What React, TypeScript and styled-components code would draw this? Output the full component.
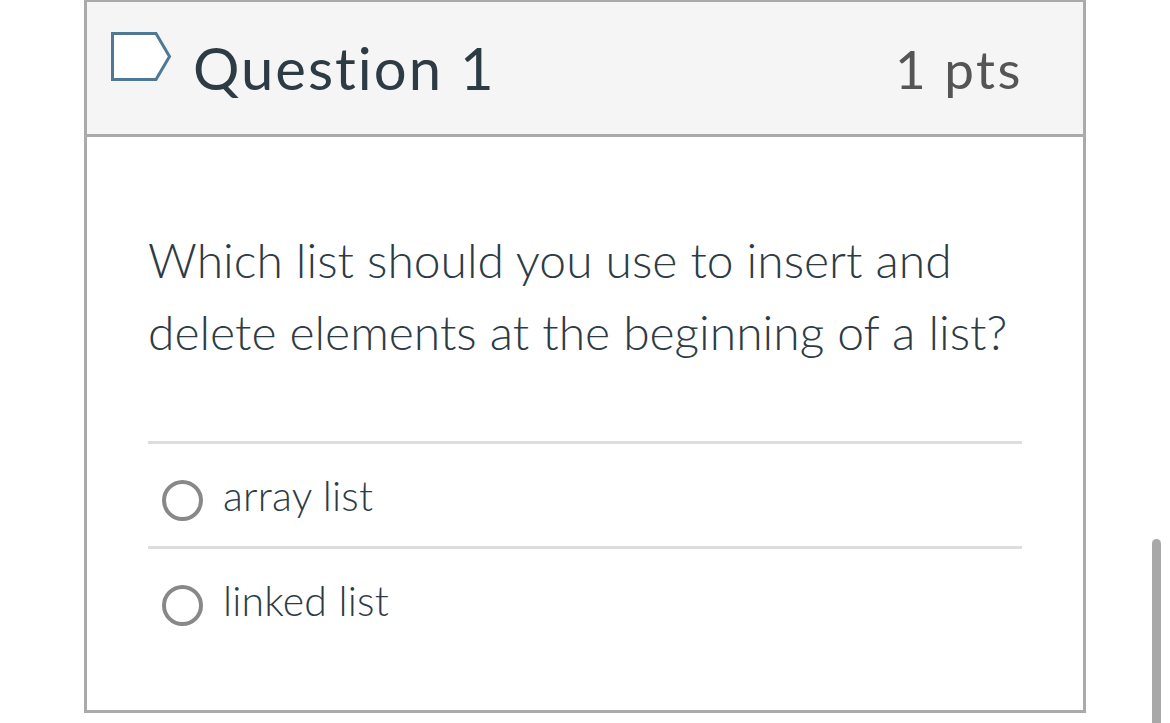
import React from "react";
import styled, { createGlobalStyle } from "styled-components";

const Global = createGlobalStyle`
  html, body { margin: 0; padding: 0; background: #ffffff; }
  body { font-family: Lato, "Open Sans", sans-serif; overflow: hidden; }
`;

const Page = styled.div`
  width: 1170px;
  height: 723px;
  padding-left: 84px;
  box-sizing: border-box;
`;

const Card = styled.div`
  width: 1002px;
  height: 713px;
  box-sizing: border-box;
  border: 3px solid #aaaaaa;
  border-top-width: 2px;
  display: flex;
  flex-direction: column;
`;

const Header = styled.div`
  height: 135px;
  flex: none;
  box-sizing: border-box;
  background: #f5f5f5;
  border-bottom: 3px solid #aaaaaa;
  display: flex;
  align-items: center;
  padding: 0 62px 0 24px;
`;

const Flag = styled.svg`
  width: 61px;
  height: 49px;
  flex: none;
  align-self: flex-start;
  margin-top: 30px;
  margin-right: 21px;
`;

const Title = styled.h2`
  margin: 0;
  flex: 1;
  font-family: Lato, sans-serif;
  font-weight: 400;
  font-size: 58px;
  letter-spacing: 2px;
  color: #2d3b45;
  line-height: 1;
`;

const Points = styled.div`
  font-family: Lato, sans-serif;
  font-weight: 400;
  font-size: 53px;
  color: #555555;
  line-height: 1;
  letter-spacing: 2.5px;
  margin-right: -2px;
`;

const Body = styled.div`
  flex: 1;
  padding: 87px 61px 0 61px;
`;

const QuestionText = styled.p`
  margin: 0 0 73px 0;
  font-family: Lato, sans-serif;
  font-weight: 300;
  font-size: 48px;
  line-height: 72px;
  color: #2d3b45;
`;

const Answer = styled.label`
  display: flex;
  align-items: center;
  height: 102px;
  border-top: 3px solid #dddddd;
  padding-left: 14px;
  gap: 20px;
`;

const Radio = styled.span`
  width: 41px;
  height: 41px;
  box-sizing: border-box;
  border: 4px solid #888888;
  border-radius: 50%;
  flex: none;
  margin-top: 10px;
`;

const AnswerText = styled.span`
  font-family: Lato, sans-serif;
  font-weight: 300;
  font-size: 41px;
  letter-spacing: 0.2px;
  color: #2d3b45;
  line-height: 1;
`;

const Scrollbar = styled.div`
  position: fixed;
  left: 1152px;
  top: 539px;
  width: 9px;
  height: 200px;
  background: #a8a8a8;
  border-radius: 5px 5px 0 0;
`;

const answers = ["array list", "linked list"];

export default function App() {
  return (
    <>
      <Global />
      <Page>
        <Card>
          <Header>
            <Flag viewBox="0 0 61 49">
              <path
                d="M1.5 1.5 H45 L58.5 24.5 L45 47.5 H1.5 Z"
                fill="#ffffff"
                stroke="#4f7896"
                strokeWidth="3"
                strokeLinejoin="miter"
              />
            </Flag>
            <Title>Question 1</Title>
            <Points>1 pts</Points>
          </Header>
          <Body>
            <QuestionText>
              Which list should you use to insert and
              <br />
              delete elements at the beginning of a list?
            </QuestionText>
            {answers.map((a) => (
              <Answer key={a}>
                <Radio />
                <AnswerText>{a}</AnswerText>
              </Answer>
            ))}
          </Body>
        </Card>
      </Page>
      <Scrollbar />
    </>
  );
}
